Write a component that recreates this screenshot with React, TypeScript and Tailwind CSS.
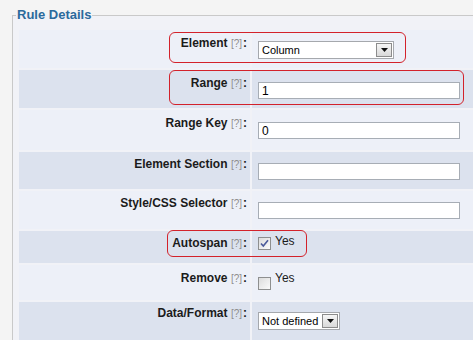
import * as React from "react";

type RowProps = {
  label: string;
  dark?: boolean;
  h: string;
  labelPad?: string;
  valuePad: string;
  children: React.ReactNode;
};

function Row({ label, dark, h, labelPad = "pt-[5px]", valuePad, children }: RowProps) {
  const bg = dark ? "bg-[#dce2ee]" : "bg-[#edf0f8]";
  return (
    <>
      <div className={`${bg} ${h} ${labelPad} pr-[3px] text-right text-[12px] leading-[14px] text-[#1b1b1b]`}>
        <span className="font-bold">{label}</span>{" "}
        <span className="text-[10px] text-[#8d8d8d]">[?]</span>
        <span className="ml-[1px] font-bold">:</span>
      </div>
      <div className={`${bg} ${h} ${valuePad} pl-[6px]`}>{children}</div>
    </>
  );
}

function TextBox({ value, width }: { value?: string; width: string }) {
  return (
    <div
      className={`${width} flex h-[17px] items-center border border-[#a7adb5] bg-white pl-[3px] text-[12px] leading-[14px] text-black`}
    >
      {value}
    </div>
  );
}

function Select({ value, width }: { value: string; width: string }) {
  return (
    <div
      className={`${width} flex h-[18px] items-center justify-between whitespace-nowrap border border-[#a5a8ad] bg-white pl-[3px] pr-[1px] text-[11px] leading-[14px] text-black`}
    >
      <span>{value}</span>
      <span className="flex h-[14px] w-[16px] shrink-0 items-center justify-center border border-[#8c8c8c] bg-gradient-to-b from-[#f6f6f6] to-[#d9d9d9]">
        <svg width="7" height="4" viewBox="0 0 7 4">
          <path d="M0 0h7L3.5 4z" fill="#111" />
        </svg>
      </span>
    </div>
  );
}

function Check({ checked }: { checked?: boolean }) {
  return (
    <span className="flex h-[13px] w-[13px] items-center justify-center border border-[#8e8f8f] bg-gradient-to-br from-[#dcdcdc] to-[#fbfbfb]">
      {checked && (
        <svg width="9" height="9" viewBox="0 0 9 9">
          <path d="M1 4.5l2.3 2.6L8 1.2" fill="none" stroke="#4b5a9a" strokeWidth="1.6" />
        </svg>
      )}
    </span>
  );
}

export default function App() {
  return (
    <div className="relative h-[340px] w-[473px] overflow-hidden bg-[#f4f4f4] font-['Liberation_Sans',Arial,sans-serif]">
      <fieldset className="ml-[12px] mt-[7px] w-[480px] min-w-0 border border-[#c9c9c9] bg-[#f1f2f7] pb-4 pt-[7px]">
        <legend className="ml-[3px] px-[1px] text-[13px] font-bold leading-[16px] text-[#2b6a9c]">
          Rule Details
        </legend>
        <div className="ml-[6px] grid grid-cols-[231px_1fr] gap-[2px]">
          <Row label="Element" h="h-[38px]" labelPad="pt-[6px]" valuePad="pt-[11px]">
            <Select value="Column" width="w-[136px]" />
          </Row>
          <Row label="Range" dark h="h-[38px]" labelPad="pt-[6px]" valuePad="pt-[12px]">
            <TextBox value="1" width="w-[202px]" />
          </Row>
          <Row label="Range Key" h="h-[40px]" labelPad="pt-[6px]" valuePad="pt-[12px]">
            <TextBox value="0" width="w-[202px]" />
          </Row>
          <Row label="Element Section" dark h="h-[37px]" labelPad="pt-[5px]" valuePad="pt-[11px]">
            <TextBox width="w-[202px]" />
          </Row>
          <Row label="Style/CSS Selector" h="h-[38px]" labelPad="pt-[5px]" valuePad="pt-[11px]">
            <TextBox width="w-[202px]" />
          </Row>
          <Row label="Autospan" dark h="h-[32px]" labelPad="pt-[5px]" valuePad="pt-[6px]">
            <div className="flex items-start gap-[4px]">
              <Check checked />
              <span className="-mt-[3px] text-[12px] leading-[14px] text-[#1b1b1b]">Yes</span>
            </div>
          </Row>
          <Row label="Remove" h="h-[35px]" labelPad="pt-[6px]" valuePad="pt-[12px]">
            <div className="flex items-start gap-[4px]">
              <Check />
              <span className="-mt-[6px] text-[12px] leading-[14px] text-[#1b1b1b]">Yes</span>
            </div>
          </Row>
          <Row label="Data/Format" dark h="h-[60px]" labelPad="pt-[4px]" valuePad="pt-[10px]">
            <Select value="Not defined" width="w-[82px]" />
          </Row>
        </div>
      </fieldset>

      <div className="pointer-events-none absolute left-[169px] top-[32px] h-[31px] w-[237px] rounded-[6px] border-[1.5px] border-[#d3222b]" />
      <div className="pointer-events-none absolute left-[169px] top-[70px] h-[35px] w-[295px] rounded-[6px] border-[1.5px] border-[#d3222b]" />
      <div className="pointer-events-none absolute left-[167px] top-[230px] h-[27px] w-[140px] rounded-[6px] border-[1.5px] border-[#d3222b]" />
    </div>
  );
}
